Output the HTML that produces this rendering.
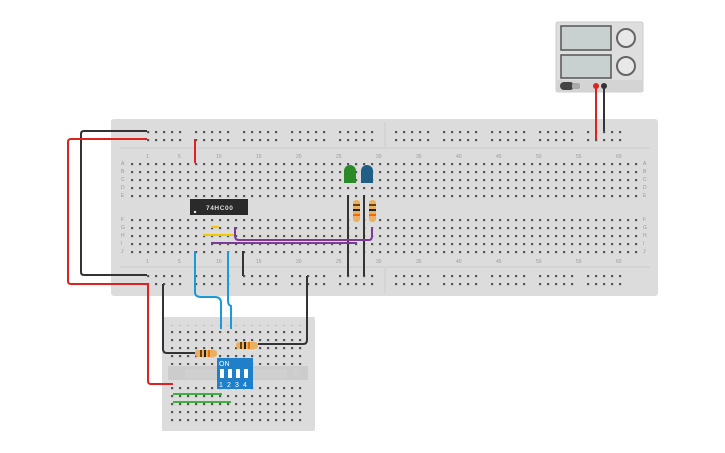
<!DOCTYPE html>
<html><head><meta charset="utf-8"><style>
html,body{margin:0;padding:0;background:#fff;width:725px;height:453px;overflow:hidden}
svg text{font-family:"Liberation Sans",sans-serif}
</style></head><body>
<svg width="725" height="453" viewBox="0 0 725 453" xmlns="http://www.w3.org/2000/svg">
<defs>
<pattern id="h" x="0" y="0" width="8" height="8" patternUnits="userSpaceOnUse">
<rect x="3" y="3" width="2.2" height="2.2" fill="#555"/></pattern>
<pattern id="r" x="0" y="0" width="48" height="8" patternUnits="userSpaceOnUse">
<rect x="3" y="3" width="2.2" height="2.2" fill="#555"/><rect x="11" y="3" width="2.2" height="2.2" fill="#555"/><rect x="19" y="3" width="2.2" height="2.2" fill="#555"/><rect x="27" y="3" width="2.2" height="2.2" fill="#555"/><rect x="35" y="3" width="2.2" height="2.2" fill="#555"/></pattern>
<pattern id="r2" x="8" y="0" width="48" height="8" patternUnits="userSpaceOnUse">
<rect x="3" y="3" width="2.2" height="2.2" fill="#555"/><rect x="11" y="3" width="2.2" height="2.2" fill="#555"/><rect x="19" y="3" width="2.2" height="2.2" fill="#555"/><rect x="27" y="3" width="2.2" height="2.2" fill="#555"/><rect x="35" y="3" width="2.2" height="2.2" fill="#555"/></pattern>
</defs>
<rect x="111" y="119" width="547" height="177" rx="3" fill="#dcdcdc"/>
<line x1="120" y1="148" x2="650" y2="148" stroke="#ccc"/>
<line x1="120" y1="267" x2="650" y2="267" stroke="#ccc"/>
<line x1="385" y1="122" x2="385" y2="147" stroke="#ccc"/>
<line x1="385" y1="268" x2="385" y2="293" stroke="#ccc"/>
<rect x="143" y="127" width="240" height="16" fill="url(#r)"/>
<rect x="391" y="127" width="232" height="16" fill="url(#r2)"/>
<rect x="143" y="272" width="240" height="16" fill="url(#r)"/>
<rect x="391" y="272" width="232" height="16" fill="url(#r2)"/>
<rect x="127" y="159" width="512" height="40" fill="url(#h)"/>
<rect x="127" y="215" width="512" height="40" fill="url(#h)"/>
<g font-size="5" fill="#999">
<text x="146" y="158">1</text><text x="178" y="158">5</text><text x="216" y="158">10</text><text x="256" y="158">15</text><text x="296" y="158">20</text><text x="336" y="158">25</text><text x="376" y="158">30</text><text x="416" y="158">35</text><text x="456" y="158">40</text><text x="496" y="158">45</text><text x="536" y="158">50</text><text x="576" y="158">55</text><text x="616" y="158">60</text>
<text x="146" y="263">1</text><text x="178" y="263">5</text><text x="216" y="263">10</text><text x="256" y="263">15</text><text x="296" y="263">20</text><text x="336" y="263">25</text><text x="376" y="263">30</text><text x="416" y="263">35</text><text x="456" y="263">40</text><text x="496" y="263">45</text><text x="536" y="263">50</text><text x="576" y="263">55</text><text x="616" y="263">60</text>
<text x="121" y="165">A</text><text x="121" y="173">B</text><text x="121" y="181">C</text><text x="121" y="189">D</text><text x="121" y="197">E</text><text x="121" y="221">F</text><text x="121" y="229">G</text><text x="121" y="237">H</text><text x="121" y="245">I</text><text x="121" y="253">J</text>
<text x="643" y="165">A</text><text x="643" y="173">B</text><text x="643" y="181">C</text><text x="643" y="189">D</text><text x="643" y="197">E</text><text x="643" y="221">F</text><text x="643" y="229">G</text><text x="643" y="237">H</text><text x="643" y="245">I</text><text x="643" y="253">J</text>
</g>
<rect x="162" y="317" width="153" height="114" rx="2" fill="#dcdcdc"/>
<rect x="168" y="366" width="140" height="14" fill="#ccc"/>
<circle cx="180" cy="373" r="5" fill="#ccc"/>
<rect x="169" y="325" width="136" height="40" fill="url(#h)"/>
<rect x="169" y="382" width="136" height="40" fill="url(#h)"/>
<rect x="185" y="369" width="102" height="9" fill="#d0d0d0"/>
<circle cx="297" cy="373" r="4.5" fill="#cfcfcf"/>
<rect x="556" y="22" width="87" height="70" rx="2" fill="#dedede" stroke="#ccc"/>
<rect x="561" y="26" width="50" height="24" fill="#c9d0d0" stroke="#555" stroke-width="1.5"/>
<rect x="561" y="55" width="50" height="23" fill="#c9d0d0" stroke="#555" stroke-width="1.5"/>
<circle cx="626" cy="38" r="9" fill="#e8e8e8" stroke="#666" stroke-width="2"/>
<circle cx="626" cy="66" r="9" fill="#e8e8e8" stroke="#666" stroke-width="2"/>
<rect x="557" y="80" width="85" height="12" fill="#d4d4d4"/>
<rect x="560" y="82" width="14" height="8" rx="4" fill="#444"/>
<rect x="572" y="83" width="8" height="6" rx="2" fill="#aaa"/>
<g fill="none" stroke-width="2" stroke-linejoin="round">
<path d="M596 86 V139" stroke="#d22"/>
<path d="M604 86 V131" stroke="#333"/>
<path d="M147 131 H84 Q81 131 81 134 V272 Q81 275 84 275 H147" stroke="#333"/>
<path d="M147 139 H71 Q68 139 68 142 V281 Q68 284 71 284 H147 Q148 284 148 287 V381 Q148 384 151 384 H173" stroke="#d22"/>
<path d="M195 139 V163" stroke="#d22"/>
<path d="M163 284 V349 Q163 353 167 353 H195" stroke="#333"/>
<path d="M307 276 V340 Q307 344 303 344 H258" stroke="#333"/>
<path d="M243 251 V276" stroke="#333"/>
<path d="M348 195 V276" stroke="#333"/>
<path d="M364 195 V276" stroke="#333"/>
<path d="M195 251 V292 Q195 297 201 297 H215 Q221 297 221 303 V329" stroke="#1a9ad6"/>
<path d="M228 251 V301 Q228 305 231 306 V329" stroke="#1a9ad6"/>
<path d="M211 227 H219" stroke="#f0c800"/>
<path d="M203 235 H235" stroke="#f0c800"/>
<path d="M235 227 V236 Q235 240 239 240 H369 Q372 240 372 236 V227" stroke="#7a3a98"/>
<path d="M211 243 H357" stroke="#7a3a98"/>
<path d="M173 394 H222" stroke="#3cb040"/>
<path d="M173 402 H231" stroke="#3cb040"/>
</g>
<rect x="190" y="199" width="58" height="16" fill="#2a2a2a"/>
<text x="206" y="210" font-size="6.5" font-weight="bold" fill="#ddd" letter-spacing="0.6">74HC00</text>
<circle cx="195" cy="212" r="1.2" fill="#eee"/>
<path d="M344 183 V171 a6 6 0 0 1 12 0 V183 Z" fill="#2a8a28"/>
<path d="M361 183 V171 a6 6 0 0 1 12 0 V183 Z" fill="#1f5f85"/>
<rect x="353" y="200" width="7" height="22" rx="3" fill="#e8b060"/>
<rect x="353" y="204" width="7" height="2" fill="#6b3e10"/><rect x="353" y="209" width="7" height="2" fill="#222"/><rect x="353" y="214" width="7" height="2" fill="#e57000"/>
<rect x="369" y="200" width="7" height="22" rx="3" fill="#e8b060"/>
<rect x="369" y="204" width="7" height="2" fill="#6b3e10"/><rect x="369" y="209" width="7" height="2" fill="#222"/><rect x="369" y="214" width="7" height="2" fill="#e57000"/>
<rect x="195" y="350" width="22" height="7" rx="3" fill="#e8b060"/>
<rect x="200" y="350" width="2" height="7" fill="#6b3e10"/><rect x="204" y="350" width="2" height="7" fill="#222"/><rect x="208" y="350" width="2" height="7" fill="#e57000"/>
<rect x="236" y="342" width="22" height="7" rx="3" fill="#e8b060"/>
<rect x="240" y="342" width="2" height="7" fill="#6b3e10"/><rect x="244" y="342" width="2" height="7" fill="#222"/><rect x="248" y="342" width="2" height="7" fill="#e57000"/>
<rect x="217" y="358" width="36" height="31" fill="#1f7fc8"/>
<text x="219" y="366" font-size="7" fill="#fff">ON</text>
<g fill="#fff"><rect x="220" y="369" width="4" height="9"/><rect x="228" y="369" width="4" height="9"/><rect x="236" y="369" width="4" height="9"/><rect x="244" y="369" width="4" height="9"/></g>
<g font-size="7" fill="#fff"><text x="219" y="387">1</text><text x="227" y="387">2</text><text x="235" y="387">3</text><text x="243" y="387">4</text></g>
<circle cx="596" cy="86" r="3" fill="#d22"/>
<circle cx="604" cy="86" r="3" fill="#333"/>
</svg>
</body></html>
